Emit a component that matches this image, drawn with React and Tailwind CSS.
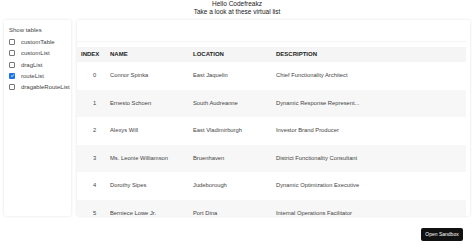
import React from "react";

const rows = [
  ["0", "Connor Spinka", "East Jaquelin", "Chief Functionality Architect"],
  ["1", "Ernesto Schoen", "South Audreanne", "Dynamic Response Represent..."],
  ["2", "Alexys Will", "East Vladimirburgh", "Investor Brand Producer"],
  ["3", "Ms. Leonie Williamson", "Bruenhaven", "District Functionality Consultant"],
  ["4", "Dorothy Sipes", "Judeborough", "Dynamic Optimization Executive"],
  ["5", "Berniece Lowe Jr.", "Port Dina", "Internal Operations Facilitator"],
];

const tables = [
  ["customTable", false],
  ["customList", false],
  ["dragList", false],
  ["routeList", true],
  ["dragableRouteList", false],
];

function Box({ checked }) {
  return checked ? (
    <span className="w-[6px] h-[6px] rounded-[1px] bg-[#1a73e8] flex items-center justify-center">
      <svg viewBox="0 0 10 10" className="w-[5px] h-[5px]">
        <path d="M2 5.2 L4.2 7.3 L8 2.8" stroke="white" strokeWidth="1.6" fill="none" />
      </svg>
    </span>
  ) : (
    <span className="w-[6px] h-[6px] rounded-[1px] border border-[#767676] bg-white" />
  );
}

export default function App() {
  return (
    <div
      className="w-[474px] h-[248px] bg-white text-[#333] overflow-hidden relative"
      style={{ fontFamily: '"Liberation Sans", Arial, sans-serif' }}
    >
      <div className="text-center text-[6.5px] leading-[8px] pt-0 text-[#222]">
        <div>Hello Codefreakz</div>
        <div>Take a look at these virtual list</div>
      </div>
      <div className="flex gap-[6px] pl-[4px] pr-[4px] mt-[4px] h-[196px]">
        <div className="w-[67px] shrink-0 bg-white shadow-[0_0_3px_rgba(0,0,0,0.12)] rounded-[2px] pl-[5px] pt-[7px]">
          <div className="text-[6px] leading-[6px] text-[#444] mb-[6px]">Show tables</div>
          <div className="flex flex-col gap-[5.3px]">
            {tables.map(([n, c]) => (
              <div key={n} className="flex items-center gap-[6px] h-[6px]">
                <Box checked={c} />
                <span className="text-[6px] leading-[6px] text-[#444]">{n}</span>
              </div>
            ))}
          </div>
        </div>
        <div className="flex-1 bg-white shadow-[0_0_3px_rgba(0,0,0,0.12)] rounded-[2px] pr-[4px] overflow-hidden flex flex-col">
          <div className="h-[21px] shrink-0" />
          <div className="h-[6px] shrink-0 border-t border-[#f5f5f5]" />
          <div className="flex items-center h-[15px] bg-[#f5f5f5] text-[6px] font-bold text-[#222] shrink-0">
            <div className="w-[33px] pl-[4px]">INDEX</div>
            <div className="w-[83px]">NAME</div>
            <div className="w-[83px]">LOCATION</div>
            <div className="flex-1">DESCRIPTION</div>
          </div>
          {rows.map((r, i) => (
            <div
              key={i}
              className={`flex items-center h-[27.5px] shrink-0 text-[5.8px] text-[#444] ${i % 2 === 1 ? "bg-[#f7f7f7]" : "bg-white"}`}
            >
              <div className="w-[33px] text-center pl-[2px]">{r[0]}</div>
              <div className="w-[83px]">{r[1]}</div>
              <div className="w-[83px]">{r[2]}</div>
              <div className="flex-1">{r[3]}</div>
            </div>
          ))}
        </div>
      </div>
      <div className="flex justify-end pr-[11px] mt-[12px]">
        <button className="w-[42px] h-[13px] bg-[#111] text-white text-[5px] rounded-[2px] leading-[13px] text-center">
          Open Sandbox
        </button>
      </div>
    </div>
  );
}
